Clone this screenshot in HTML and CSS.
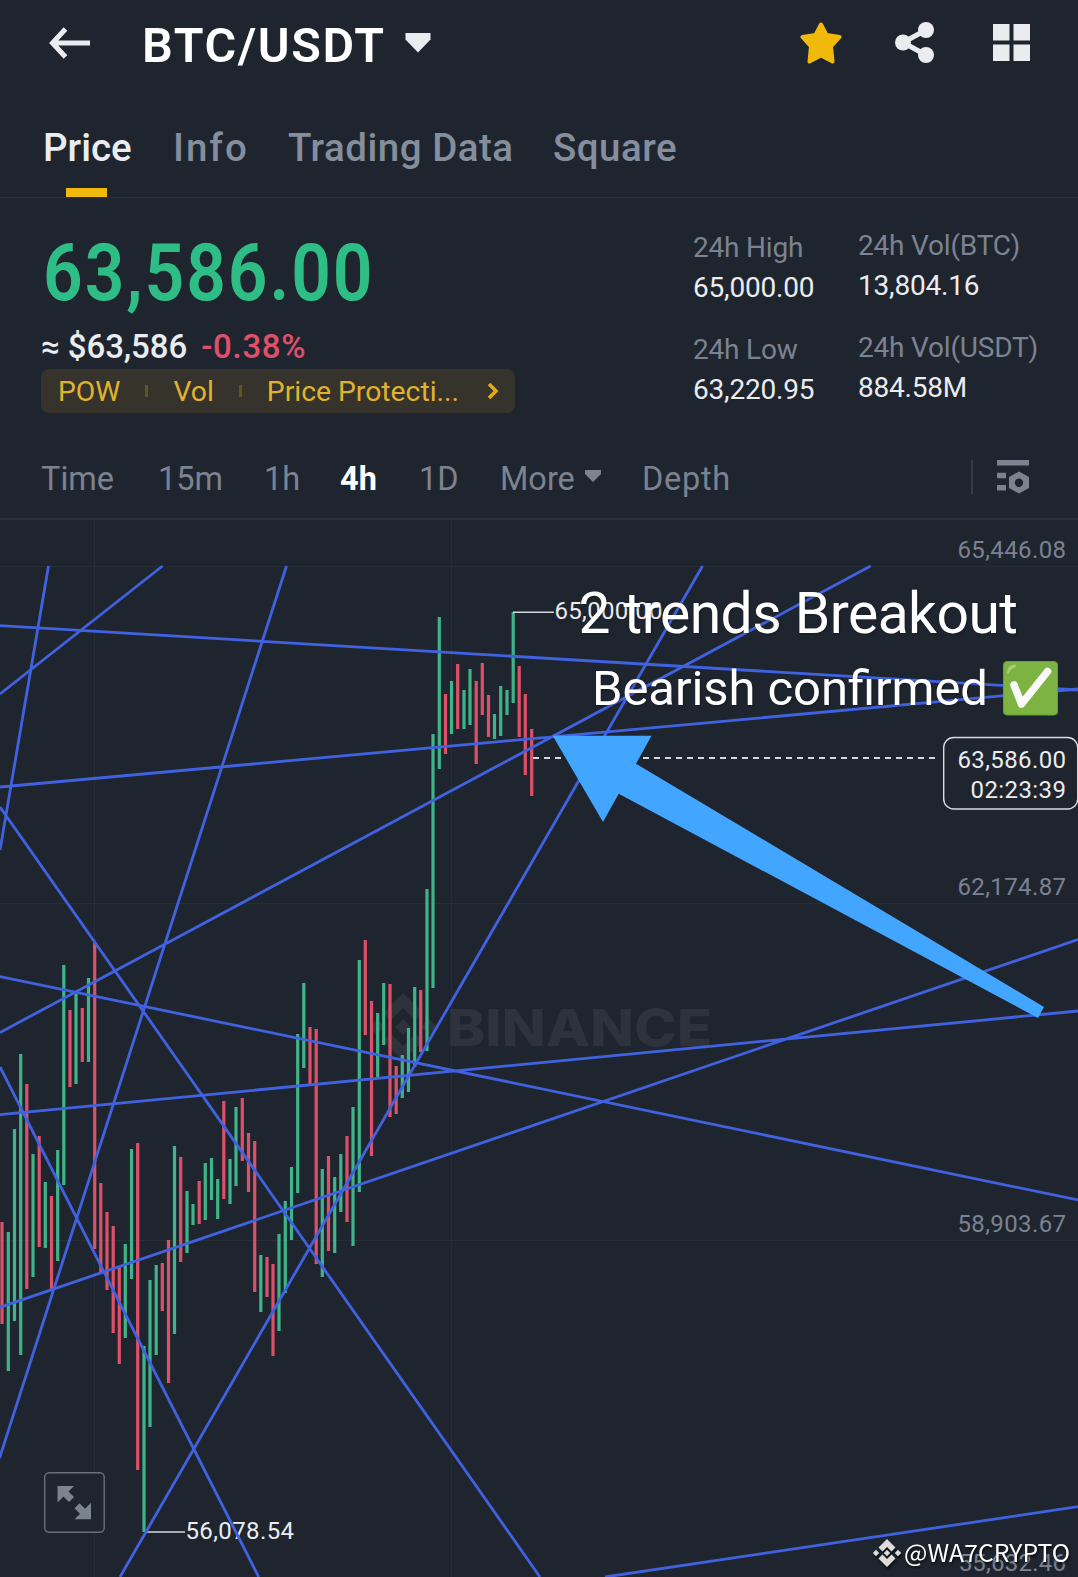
FILE: index.html
```html
<!DOCTYPE html>
<html lang="en">
<head>
    <meta charset="UTF-8">
    <meta name="viewport" content="width=device-width, initial-scale=1.0">
    <title>BTC/USDT</title>
    <link rel="stylesheet" href="styles.css">
</head>
<body>
    <header class="topbar">
        <svg class="back" width="42" height="36" viewBox="0 0 42 36">
            <path d="M41 18H5M16.500 4L3.500 18L16.500 32" fill="none" stroke="#eaecef" stroke-width="5"/>
        </svg>
        <h1>BTC/USDT</h1>
        <svg class="caret" width="26" height="20" viewBox="0 0 26 20">
            <path d="M.5 0H25.500V6.500L13 19.500L.5 6.500Z" fill="#eaecef"/>
        </svg>
        <div class="actions">
            <svg width="42" height="42" viewBox="0 0 42 42">
                <path d="M21 2.500L26.500 13L39.500 15L31 24.500L32.500 39.500L21 33.500L9.500 39.500L11 24.500L2.500 15L15.500 13Z" fill="#f0b90b" stroke="#f0b90b" stroke-width="4" stroke-linejoin="round"/>
            </svg>
            <svg width="40" height="41" viewBox="0 0 40 41">
                <path d="M31 8L8 20.500L31 33" fill="none" stroke="#eaecef" stroke-width="5"/>
                <g fill="#eaecef">
                    <circle cx="31" cy="8" r="8"/>
                    <circle cx="8" cy="20.500" r="8"/>
                    <circle cx="31" cy="33" r="8"/>
                </g>
            </svg>
            <svg width="37" height="37" viewBox="0 0 37 37">
                <path d="M0 0H16.500V16.500H0ZM20.500 0H37V16.500H20.500ZM0 20.500H16.500V37H0ZM20.500 20.500H37V37H20.500Z" fill="#eaecef"/>
            </svg>
        </div>
    </header>

    <nav class="tabs">
        <a class="active">Price</a>
        <a class="info">Info</a>
        <a>Trading Data</a>
        <a>Square</a>
    </nav>

    <section class="summary">
        <div class="price-block">
            <div class="price">63,586.00</div>
            <div class="fiat">≈ $63,586 <span class="down">-0.38%</span></div>
            <div class="tags">
                <span>POW</span>
                <i></i>
                <span>Vol</span>
                <i></i>
                <span>Price Protecti...</span>
                <svg width="12" height="18" viewBox="0 0 12 18">
                    <path d="M2 2L9 9L2 16" fill="none" stroke="#e0ac10" stroke-width="3.500"/>
                </svg>
            </div>
        </div>
        <dl class="stats">
            <div><dt>24h High</dt><dd>65,000.00</dd></div>
            <div><dt>24h Low</dt><dd>63,220.95</dd></div>
        </dl>
        <dl class="stats volume">
            <div><dt>24h Vol(BTC)</dt><dd>13,804.16</dd></div>
            <div><dt>24h Vol(USDT)</dt><dd>884.58M</dd></div>
        </dl>
    </section>

    <nav class="intervals">
        <a>Time</a>
        <a>15m</a>
        <a>1h</a>
        <a class="active">4h</a>
        <a>1D</a>
        <a>More <svg width="16" height="12" viewBox="0 0 16 12"><path d="M0 0H16V4L8 12L0 4Z" fill="#7b8290"/></svg></a>
        <a class="depth">Depth</a>
        <span class="divider"></span>
        <svg class="settings" width="33" height="34" viewBox="0 0 33 34">
            <path d="M0 0H32V5.500H0ZM0 12.800H9V18.200H0ZM0 25H9V30.500H0Z" fill="#7b8290"/>
            <path fill-rule="evenodd" d="M22 11.500L32 17V28L22 33.500L12 28V17ZM22 18.500A4.200 4.200 0 1 0 22 26.900A4.200 4.200 0 1 0 22 18.500Z" fill="#7b8290"/>
        </svg>
    </nav>

    <main>
        <svg class="chart" width="1078" height="1057" viewBox="0 520 1078 1057">
            <path class="grid" d="M94.500 520V1577M451.500 520V1577M0 566.500H1078M0 903.500H1078M0 1240.500H1078"/>

            <!-- watermark -->
            <g fill="#2d323d">
                <path d="M403 993L423 1013L415.500 1020.500L403 1008L390.500 1020.500L383 1013ZM403 1061L423 1041L415.500 1033.500L403 1046L390.500 1033.500L383 1041ZM403 1019L411 1027L403 1035L395 1027ZM377 1019L385 1027L377 1035L369 1027ZM429 1019L437 1027L429 1035L421 1027Z"/>
                <text class="brand" x="447" y="1045.500" textLength="265" lengthAdjust="spacingAndGlyphs">BINANCE</text>
            </g>

            <!-- candles -->
            <path class="candle up" d="M8.300 1232V1371M14.500 1129V1321M20.700 1054V1355M33 1154V1277M45.300 1182V1248M57.700 1150V1261M63.800 965V1185M76 994V1084M88.500 978V1062M125.300 1244V1338M131.500 1149V1279M144 1346V1532M150 1280V1427M156.200 1265V1355M174.500 1146V1334M187 1191V1253M193 1204V1225M205.300 1163V1220M211.500 1158V1200M217.700 1179V1219M230 1159V1204M236 1107V1186M260.800 1255V1312M279 1234V1331M285.300 1201V1293M291.500 1167V1240M297.700 1034V1193M303.800 983V1068M322.300 1169V1277M334.700 1177V1253M340.800 1154V1212M353 1107V1246M359.300 960V1192M377.700 1013V1079M383.700 983V1045M402.300 1055V1098M408.500 1028V1092M414.700 987V1067M427 889V1051M433 734V988M439.300 617V769M451.500 681V734M464 690V729M470 669V725M494.500 714V739M500.700 686V736M507 690V715M513.200 612V703"/>
            <path class="candle dn" d="M2 1222V1324M26.800 1084V1289M39.200 1136V1247M51.500 1196V1289M70 1010V1087M82.300 1008V1062M94.700 943V1249M100.800 1183V1272M107 1212V1290M113.200 1226V1333M119.300 1266V1364M137.700 1143V1470M162.300 1263V1311M168.500 1240V1383M180.700 1157V1262M199.200 1181V1224M223.800 1101V1199M242.300 1098V1161M248.500 1133V1192M254.700 1141V1292M267 1257V1297M273 1264V1356M310 1027V1084M316.200 1029V1264M328.500 1156V1251M347 1136V1222M365.300 940V1035M371.500 1001V1156M390 984V1117M396.200 1066V1114M420.700 990V1052M445.500 694V754M457.700 664V729M476.200 681V764M482.300 663V715M488.500 695V737M519.200 666V737M525.300 694V775M531.700 729V796"/>

            <!-- high / low marks -->
            <path d="M513 612.300H554M146 1532H185" stroke="#d5d8dc" stroke-width="1.600"/>
            <g class="label bright">
                <text x="554.500" y="619.300" textLength="108">65,000.00</text>
                <text x="185.500" y="1538.700" textLength="108.500">56,078.54</text>
            </g>

            <!-- trend lines -->
            <path class="trend" d="M0 625.700L1078 690M0 787L1078 689M0 1032.500L870.700 566M0 976.500L1078 1200M0 1114.700L1078 1011M0 1307.300L1078 939.500M0 850L48.500 566M0 694L162.500 566M-.5 1458L286.500 566M0 807L540 1577M0 1067L258.700 1577M120 1577L702.500 566M605 1577L1078 1506.700"/>

            <!-- last price -->
            <path d="M533 758H938" stroke="#d5d8dc" stroke-width="1.800" stroke-dasharray="6 5"/>
            <rect x="943.700" y="737.500" width="134" height="71.500" rx="10" fill="#1f252f" stroke="#d9dce1" stroke-width="1.400"/>
            <g class="label bright">
                <text x="957.500" y="767.700" textLength="108.500">63,586.00</text>
                <text x="970.500" y="797.700" textLength="95.500">02:23:39</text>
            </g>
            <g class="label">
                <text x="957.500" y="558" textLength="108.500">65,446.08</text>
                <text x="957.500" y="895" textLength="108.500">62,174.87</text>
                <text x="957.500" y="1232" textLength="108.500">58,903.67</text>
                <text x="958.500" y="1570.700" textLength="107.500">55,632.46</text>
            </g>

            <!-- annotations -->
            <path d="M552.700 735.700H651.500L636 763.700L1044 1007L1038 1018L618.700 793.700L603 822Z" fill="#42a5ff"/>
            <g class="note">
                <text x="578.500" y="632.500" font-size="57" textLength="439.500">2 trends Breakout</text>
                <text x="592" y="704.700" font-size="49" textLength="396">Bearish confirmed</text>
            </g>
            <rect x="1003.500" y="661.500" width="54" height="53.500" rx="3.500" fill="#7cb342" stroke="#68a033"/>
            <path d="M1007 673Q1007 665 1015 664.500Q1018 665.500 1015 667.500Q1010 669 1009 673Q1008 675.500 1007 673Z" fill="#a6cd78"/>
            <path d="M1014 685L1021.500 704L1047.500 671.500" fill="none" stroke="#fafafa" stroke-width="7.500" stroke-linecap="round" stroke-linejoin="round"/>

            <!-- fullscreen -->
            <rect x="44.700" y="1472.700" width="59.500" height="59.500" rx="4.500" fill="#1f252f" stroke="#68707d" stroke-width="1.400"/>
            <path d="M57.500 1486H74L68.500 1491.500L74 1497L69 1502L63.500 1496.500L57.500 1502.500ZM91 1519.300H74.500L80 1513.800L74.500 1508.300L79.500 1503.300L85 1508.800L91 1502.800Z" fill="#7b8290"/>

            <g class="handle">
                <path d="M887 1539L895.500 1547.500L891.500 1551.500L887 1547L882.500 1551.500L878.500 1547.500ZM887 1567L895.500 1558.500L891.500 1554.500L887 1559L882.500 1554.500L878.500 1558.500ZM887 1549.800L890.200 1553L887 1556.200L883.800 1553ZM876 1549.800L879.200 1553L876 1556.200L872.800 1553ZM898 1549.800L901.200 1553L898 1556.200L894.800 1553Z" fill="#dcdcdc"/>
                <text x="904" y="1562" textLength="166" lengthAdjust="spacingAndGlyphs">@WA7CRYPTO</text>
            </g>
        </svg>
    </main>
</body>
</html>
```
FILE: styles.css
```css
* {
    box-sizing: border-box;
}

body {
    margin: 0;
    width: 1078px;
    height: 1577px;
    overflow: hidden;
    background: #1f252f;
    color: #eaecef;
    font-family: Roboto, 'Liberation Sans', sans-serif;
}

svg {
    display: block;
    flex: none;
}

.topbar {
    display: flex;
    align-items: center;
    height: 85px;
    padding: 0 48px 0 49px;
}

h1 {
    margin: 6px 0 0 51px;
    width: 263px;
    font-size: 48.5px;
    line-height: 60px;
    font-weight: 600;
    letter-spacing: 1.6px;
    color: #fff;
    white-space: nowrap;
}

.actions {
    display: flex;
    align-items: center;
    margin-left: auto;
    gap: 53px;
}

.actions svg:last-child {
    margin-left: 5px;
}

.tabs {
    display: grid;
    grid-template-columns: 130px 115px 265px 140px;
    height: 113px;
    padding: 43px 0 0 43px;
    border-bottom: 1px solid #2b313a;
}

.tabs a {
    position: relative;
    font-size: 38.5px;
    line-height: 40px;
    font-weight: 500;
    letter-spacing: 0.5px;
    color: #848e9c;
    white-space: nowrap;
}

.tabs .info {
    letter-spacing: 2px;
}

.tabs a.active {
    color: #eaecef;
    letter-spacing: 0;
}

.tabs a.active::after {
    content: '';
    position: absolute;
    left: 23px;
    bottom: 0;
    width: 41px;
    height: 9px;
    background: #f0b90b;
}

.summary {
    display: grid;
    grid-template-columns: 652px 165px 1fr;
    height: 242px;
    padding: 35px 0 0 41px;
}

.price {
    font-size: 79px;
    line-height: 80px;
    font-weight: 600;
    letter-spacing: 2.2px;
    color: #2ebd85;
    transform: translateX(2px) scaleX(0.88);
    transform-origin: left;
}

.fiat {
    margin-top: 12px;
    font-size: 33px;
    line-height: 44px;
    font-weight: 500;
    letter-spacing: -0.1px;
}

.down {
    margin-left: 6px;
    letter-spacing: 0.7px;
    color: #e0506a;
}

.tags {
    display: flex;
    align-items: center;
    width: 474px;
    height: 44px;
    padding: 0 16px 0 17px;
    border-radius: 8px;
    background: #35332b;
    color: #e0b32c;
    font-size: 28.3px;
    white-space: nowrap;
}

.tags i {
    width: 3px;
    height: 12px;
    margin: 0 25px;
    background: #5f5328;
}

.tags svg {
    margin-left: auto;
}

.stats {
    margin: -5px 0 0;
    font-size: 28px;
    line-height: 40px;
    letter-spacing: -0.2px;
    white-space: nowrap;
}

.stats.volume {
    margin-top: -7px;
}

.stats div {
    margin-bottom: 22px;
}

.stats dt {
    color: #7b8290;
}

.stats dd {
    margin: 0;
}

.intervals {
    display: grid;
    grid-template-columns: 117px 106px 76px 79px 81px 142px 329px 26px 1fr;
    align-items: center;
    height: 80px;
    padding-left: 41px;
    border-bottom: 2px solid #2a3039;
    font-size: 32.5px;
    color: #7b8290;
}

.intervals a {
    display: flex;
    gap: 10px;
    white-space: nowrap;
}

.intervals a svg {
    margin-top: 10px;
}

.intervals .depth {
    letter-spacing: 0.7px;
}

.intervals .active {
    color: #fff;
    font-weight: 700;
}

.divider {
    width: 2px;
    height: 34px;
    margin-bottom: 4px;
    background: #353b46;
}

.settings {
    margin-bottom: 4px;
}

.grid {
    fill: none;
    stroke: #272d37;
    stroke-width: 1.2;
}

.candle {
    fill: none;
    stroke-width: 3.2;
}

.up {
    stroke: #3fb488;
}

.dn {
    stroke: #dc5068;
}

.trend {
    fill: none;
    stroke: #4062e0;
    stroke-width: 2.8;
}

.label {
    font-size: 24px;
    fill: #7b8290;
}

.bright {
    fill: #eaecef;
}

.brand {
    font-family: Inter, sans-serif;
    font-size: 51.5px;
    font-weight: 800;
}

.note {
    fill: #fff;
    filter: drop-shadow(1px 1px 1px rgba(0, 0, 0, 0.3));
}

.handle {
    fill: #fff;
    font-family: 'Noto Sans CJK SC', 'Noto Sans', sans-serif;
    font-size: 24px;
    filter: drop-shadow(1px 2px 1px rgba(0, 0, 0, 0.7));
}
```
